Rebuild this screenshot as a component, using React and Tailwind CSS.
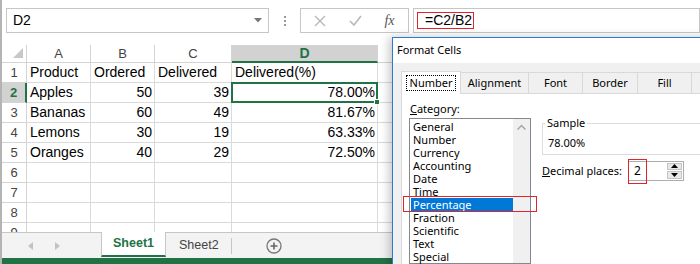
import React from 'react'

const COL_HEADERS = ['A', 'B', 'C', 'D', 'E']

// rows of the sheet, row 1 is the header text row
const ROWS = [
  ['Product', 'Ordered', 'Delivered', 'Delivered(%)'],
  ['Apples', 50, 39, '78.00%'],
  ['Bananas', 60, 49, '81.67%'],
  ['Lemons', 30, 19, '63.33%'],
  ['Oranges', 40, 29, '72.50%'],
  [], [], [], [],
]

const CATEGORIES = [
  'General', 'Number', 'Currency', 'Accounting', 'Date', 'Time',
  'Percentage', 'Fraction', 'Scientific', 'Text', 'Special',
]

const TABS = [
  { label: 'Alignment', w: 'w-[68px]' },
  { label: 'Font', w: 'w-[54px]' },
  { label: 'Border', w: 'w-[55px]' },
  { label: 'Fill', w: 'w-[54px]' },
  { label: 'Protection', w: 'w-[110px]' },
]

const FormulaBar = () => (
  <div className="flex h-[45px] items-start pl-[4px] pt-[8px]">
    <div className="flex h-[25px] w-[263px] items-center justify-between border border-[#c6c6c6] px-[6px] text-[14px]">
      <span>D2</span>
      <svg width="8" height="5" viewBox="0 0 8 5">
        <path d="M0 0h8L4 4.5z" fill="#777" />
      </svg>
    </div>
    <div className="flex h-[25px] w-[31px] flex-col items-center justify-center gap-[2px]">
      <span className="h-[2px] w-[2px] bg-[#999]" />
      <span className="h-[2px] w-[2px] bg-[#999]" />
      <span className="h-[2px] w-[2px] bg-[#999]" />
    </div>
    <div className="flex h-[25px] w-[109px] items-center border border-[#c6c6c6]">
      <div className="flex w-[38px] justify-center">
        <svg width="12" height="12" viewBox="0 0 12 12">
          <path d="M1 1l10 10M11 1L1 11" stroke="#b8b8b8" strokeWidth="1.4" />
        </svg>
      </div>
      <div className="flex w-[32px] justify-center">
        <svg width="13" height="11" viewBox="0 0 13 11">
          <path d="M1 6l4 4 7-9" stroke="#b8b8b8" strokeWidth="1.6" fill="none" />
        </svg>
      </div>
      <div className="flex w-[37px] justify-center font-['Liberation_Serif',serif] text-[14px] italic text-[#555]">
        fx
      </div>
    </div>
    <div className="ml-[4px] flex h-[25px] flex-1 items-center border border-[#c6c6c6]">
      <span className="ml-[3px] flex h-[17px] items-center border border-[#e0242c] pl-[7px] pr-[1px] text-[14px]">
        =C2/B2
      </span>
    </div>
  </div>
)

const Sheet = () => (
  <div className="grid h-[187px] grid-cols-[25px_64px_64px_77px_146px_1fr] grid-rows-[18px] auto-rows-[20px] overflow-hidden">
    {/* corner */}
    <div className="flex items-end justify-end border-b border-r border-[#d4d4d4] pb-[4px] pr-[3px]">
      <svg width="10" height="10" viewBox="0 0 10 10">
        <path d="M10 0v10H0z" fill="#c8c8c8" />
      </svg>
    </div>
    {COL_HEADERS.map((c) =>
      c === 'D' ? (
        <div key={c} className="flex items-center justify-center border-b-2 border-r border-b-[#217346] border-r-[#d4d4d4] bg-[#d2d2d2] text-[14px] font-bold text-[#217346]">
          {c}
        </div>
      ) : (
        <div key={c} className="flex items-center justify-center border-b border-r border-[#d4d4d4] text-[13px] text-[#444]">
          {c}
        </div>
      )
    )}

    {ROWS.map((row, r) => {
      const n = r + 1
      const selRow = n === 2
      return (
        <React.Fragment key={n}>
          {selRow ? (
            <div className="flex items-center justify-center border-b border-r-2 border-b-[#d4d4d4] border-r-[#217346] bg-[#d2d2d2] text-[13px] font-bold text-[#217346]">
              {n}
            </div>
          ) : (
            <div className="flex items-center justify-center border-b border-r border-[#d4d4d4] text-[13px] text-[#444]">
              {n}
            </div>
          )}
          {[0, 1, 2, 3, 4].map((ci) => {
            const v = row[ci]
            const right = n > 1 && ci > 0
            const selected = n === 2 && ci === 3
            return (
              <div
                key={ci}
                className={
                  'relative flex items-center whitespace-nowrap border-b border-r border-[#dadada] px-[3px] text-[14px] ' +
                  (right ? 'justify-end pr-[2px] ' : '') +
                  (selected ? 'z-10' : 'overflow-hidden')
                }
              >
                {v}
                {selected && (
                  <div className="absolute -bottom-[1px] -left-[1px] -right-[1px] -top-[1px] border-2 border-[#217346]">
                    <div className="absolute -bottom-[4px] -right-[4px] h-[6px] w-[6px] border border-white bg-[#217346]" />
                  </div>
                )}
              </div>
            )
          })}
        </React.Fragment>
      )
    })}
  </div>
)

const SheetTabs = () => (
  <div className="flex h-[26px] items-stretch border-t border-[#c6c6c6] bg-[#f3f3f3]">
    <div className="flex w-[99px] items-center gap-[22px] pl-[26px]">
      <svg width="5" height="8" viewBox="0 0 5 8">
        <path d="M5 0v8L0 4z" fill="#c2c2c2" />
      </svg>
      <svg width="5" height="8" viewBox="0 0 5 8">
        <path d="M0 0v8l5-4z" fill="#c2c2c2" />
      </svg>
    </div>
    <div className="-mt-px mb-[1px] flex w-[65px] items-center justify-center border-x border-b-2 border-x-[#c6c6c6] border-b-[#217346] bg-white text-[12.5px] font-bold text-[#217346]">
      Sheet1
    </div>
    <div className="flex items-center pl-[13px] text-[12.5px] text-[#444]">Sheet2</div>
    <div className="ml-[12px] h-[16px] w-px self-center bg-[#c6c6c6]" />
    <div className="ml-[34px] flex items-center">
      <svg width="16" height="16" viewBox="0 0 16 16">
        <circle cx="8" cy="8" r="7" fill="none" stroke="#777" strokeWidth="1.3" />
        <path d="M8 4.5v7M4.5 8h7" stroke="#666" strokeWidth="1.6" />
      </svg>
    </div>
  </div>
)

const FormatCellsDialog = () => (
  <div className="absolute left-[390px] top-[37px] h-[240px] w-[330px] border border-[#2b7bd2] bg-[#f0f0f0] font-['Noto_Sans',sans-serif] text-[11px] text-black shadow-[-3px_0_9px_rgba(0,0,0,0.22)]">
    <div className="flex h-[25px] items-center bg-white pl-[4px]">Format Cells</div>
    <div className="pl-[8px] pt-[8px]">
      <div className="flex h-[22px] items-end">
        <div className="relative z-10 -mb-px flex h-[23px] w-[60px] shrink-0 items-center justify-center border border-b-0 border-[#d9d9d9] bg-white">
          <span className="border border-dotted border-black px-[3px] leading-[14px]">Number</span>
        </div>
        {TABS.map((t) => (
          <div key={t.label} className={'flex h-[21px] shrink-0 items-center justify-center border-r border-t border-[#d9d9d9] ' + t.w}>
            {t.label}
          </div>
        ))}
      </div>
      <div className="flex h-[200px] w-[330px] border border-[#d9d9d9] bg-white">
        <div className="shrink-0 pl-[7px] pt-[7px]">
          <div className="pl-[1px] leading-[16px]">
            <span className="underline">C</span>ategory:
          </div>
          <div className="mt-[1px] flex w-[122px] border border-[#828790]">
            <div className="w-[103px] pl-[1px] pt-[1px]">
              {CATEGORIES.map((c) =>
                c === 'Percentage' ? (
                  <div key={c} className="relative h-[13px] bg-[#0078d7] pl-[2px] leading-[13px] text-white">
                    {c}
                    <div className="absolute -bottom-[1px] -left-[8px] -right-[24px] -top-[2px] border border-[#e0242c]" />
                  </div>
                ) : (
                  <div key={c} className="h-[13px] pl-[2px] leading-[13px]">
                    {c}
                  </div>
                )
              )}
            </div>
            <div className="flex w-[17px] justify-center bg-[#f0f0f0] pt-[5px]">
              <svg width="9" height="6" viewBox="0 0 9 6">
                <path d="M0.5 5.5L4.5 1.5l4 4" stroke="#a6a6a6" strokeWidth="1.5" fill="none" />
              </svg>
            </div>
          </div>
        </div>
        <div className="ml-[11px] shrink-0 pt-[22px]">
          <fieldset className="w-[200px] border border-[#dcdcdc] pb-[4px] pl-[2px]">
            <legend className="px-[2px] leading-[14px]">Sample</legend>
            <div className="pl-[3px] pt-[6px] leading-[14px]">78.00%</div>
          </fieldset>
          <div className="mt-[3px] flex h-[25px] items-center">
            <div className="w-[86px] pt-[2px]">
              <span className="underline">D</span>ecimal places:
            </div>
            <div className="relative flex h-[20px] w-[56px] items-center border border-[#adadad]">
              <span className="pl-[5px] text-[12px]">2</span>
              <div className="my-[1px] ml-auto mr-[1px] flex h-[16px] w-[15px] flex-col gap-[1px]">
                <div className="flex flex-1 items-center justify-center border border-[#c4c4c4] bg-[#e8e8e8]">
                  <svg width="7" height="4" viewBox="0 0 7 4"><path d="M0 4h7L3.5 0z" fill="#000" /></svg>
                </div>
                <div className="flex flex-1 items-center justify-center border border-[#c4c4c4] bg-[#e8e8e8]">
                  <svg width="7" height="4" viewBox="0 0 7 4"><path d="M0 0h7L3.5 4z" fill="#000" /></svg>
                </div>
              </div>
              <div className="absolute -left-[1px] -top-[3px] h-[25px] w-[19px] border border-[#e0242c]" />
            </div>
          </div>
        </div>
      </div>
    </div>
  </div>
)

export default function App() {
  return (
    <div className="relative h-[264px] w-[700px] overflow-hidden border-l-2 border-[#b4b4b4] bg-white font-['Liberation_Sans',Arial,sans-serif] text-black">
      <FormulaBar />
      <Sheet />
      <SheetTabs />
      <div className="h-[6px] bg-[#217346]" />
      <FormatCellsDialog />
    </div>
  )
}
